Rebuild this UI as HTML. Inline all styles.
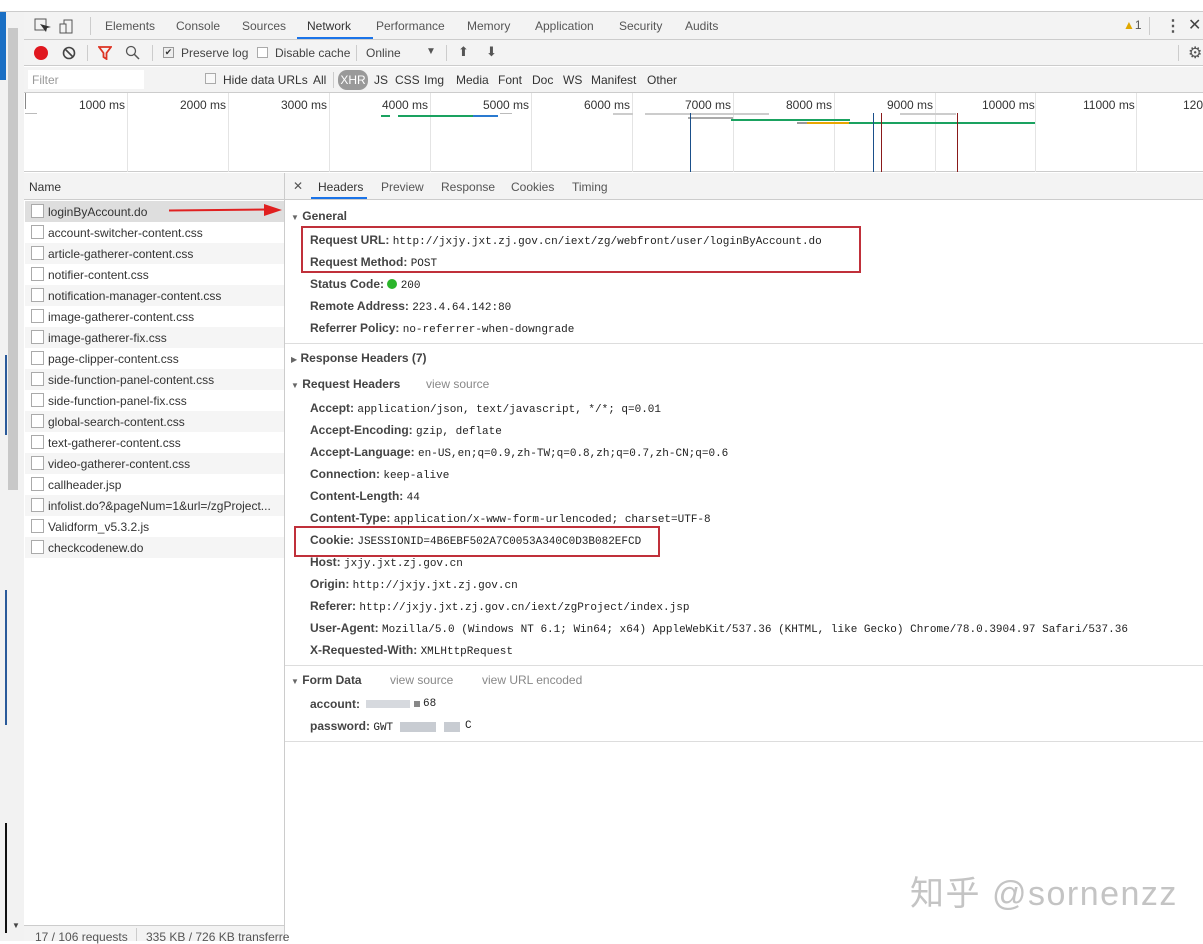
<!DOCTYPE html>
<html><head><meta charset="utf-8"><style>
*{margin:0;padding:0;box-sizing:border-box}
body{width:1203px;height:941px;overflow:hidden;background:#fff;font-family:"Liberation Sans",sans-serif;font-size:12px;color:#333;position:relative}
.a{position:absolute;white-space:nowrap}
.m{font-family:"Liberation Mono",monospace;font-size:11px;color:#222}
.k{font-weight:bold;color:#444}
.g{color:#888}
</style></head><body>
<div class="a" style="left:0;top:0;width:1203px;height:12px;background:#fff;border-bottom:1px solid #ccc"></div>
<div class="a" style="left:0;top:12px;width:24px;height:929px;background:#f2f2f2"></div>
<div class="a" style="left:0;top:12px;width:6px;height:68px;background:#1a6fc4"></div>
<div class="a" style="left:8px;top:28px;width:10px;height:462px;background:#c8c8c8"></div>
<div class="a" style="left:5px;top:590px;width:2px;height:135px;background:#2a5a9a"></div>
<div class="a" style="left:5px;top:823px;width:2px;height:110px;background:#111"></div>
<div class="a" style="left:5px;top:355px;width:2px;height:80px;background:#2a5a9a"></div>
<div class="a" style="left:24px;top:12px;width:1179px;height:28px;background:#f3f3f3;border-bottom:1px solid #ccc"></div>
<svg class="a" style="left:34px;top:18px" width="44" height="16"><rect x="1" y="1" width="11" height="11" fill="none" stroke="#555"/><path d="M6 6l6 8l1-4l4-1z" fill="#333"/><rect x="30" y="2" width="8" height="13" fill="none" stroke="#555"/><rect x="26" y="6" width="6" height="9" fill="#f3f3f3" stroke="#555"/></svg>
<div class="a" style="left:90px;top:17px;width:1px;height:18px;background:#ccc"></div>
<div class="a" style="left:105px;top:19px;color:#555">Elements</div>
<div class="a" style="left:176px;top:19px;color:#555">Console</div>
<div class="a" style="left:242px;top:19px;color:#555">Sources</div>
<div class="a" style="left:307px;top:19px;color:#333">Network</div>
<div class="a" style="left:297px;top:37px;width:76px;height:2px;background:#1a73e8"></div>
<div class="a" style="left:376px;top:19px;color:#555">Performance</div>
<div class="a" style="left:467px;top:19px;color:#555">Memory</div>
<div class="a" style="left:535px;top:19px;color:#555">Application</div>
<div class="a" style="left:619px;top:19px;color:#555">Security</div>
<div class="a" style="left:685px;top:19px;color:#555">Audits</div>
<div class="a" style="left:1123px;top:18px;color:#e0a800;font-size:12px">▲<span style="color:#555">1</span></div>
<div class="a" style="left:1149px;top:17px;width:1px;height:18px;background:#ccc"></div>
<div class="a" style="left:1165px;top:16px;font-size:16px;color:#555;font-weight:bold">⋮</div>
<div class="a" style="left:1188px;top:15px;font-size:16px;color:#444">✕</div>
<div class="a" style="left:24px;top:40px;width:1179px;height:26px;background:#f3f3f3;border-bottom:1px solid #ccc"></div>
<div class="a" style="left:34px;top:46px;width:14px;height:14px;border-radius:50%;background:#e0171f"></div>
<svg class="a" style="left:62px;top:46px" width="14" height="14"><circle cx="7" cy="7" r="5.5" fill="none" stroke="#444" stroke-width="1.6"/><path d="M3 3l8 8" stroke="#444" stroke-width="1.6"/></svg>
<div class="a" style="left:87px;top:45px;width:1px;height:16px;background:#ccc"></div>
<svg class="a" style="left:98px;top:46px" width="14" height="14"><path d="M1 1h12l-4.5 6v6l-3-2v-4z" fill="none" stroke="#d32" stroke-width="1.8"/></svg>
<svg class="a" style="left:125px;top:45px" width="16" height="16"><circle cx="6" cy="6" r="4.5" fill="none" stroke="#555" stroke-width="1.3"/><path d="M9 9l5 5" stroke="#555" stroke-width="1.5"/></svg>
<div class="a" style="left:152px;top:45px;width:1px;height:16px;background:#ccc"></div>
<div class="a" style="left:163px;top:47px;width:11px;height:11px;border:1px solid #999;background:#eee;font-size:9px;line-height:9px;text-align:center">✔</div>
<div class="a" style="left:181px;top:46px;color:#444">Preserve log</div>
<div class="a" style="left:257px;top:47px;width:11px;height:11px;border:1px solid #aaa;background:#fff"></div>
<div class="a" style="left:275px;top:46px;color:#444">Disable cache</div>
<div class="a" style="left:356px;top:45px;width:1px;height:16px;background:#ccc"></div>
<div class="a" style="left:366px;top:46px;color:#444">Online</div>
<div class="a" style="left:426px;top:46px;color:#555;font-size:10px">▼</div>
<div class="a" style="left:446px;top:45px;width:1px;height:16px;background:#ccc"></div>
<div class="a" style="left:458px;top:44px;color:#555;font-size:13px">⬆</div>
<div class="a" style="left:486px;top:44px;color:#555;font-size:13px">⬇</div>
<div class="a" style="left:1178px;top:45px;width:1px;height:16px;background:#ccc"></div>
<div class="a" style="left:1188px;top:43px;font-size:16px;color:#555">⚙</div>
<div class="a" style="left:24px;top:67px;width:1179px;height:26px;background:#f3f3f3;border-bottom:1px solid #ccc"></div>
<div class="a" style="left:28px;top:70px;width:116px;height:19px;background:#fff"></div>
<div class="a" style="left:32px;top:73px;color:#999">Filter</div>
<div class="a" style="left:205px;top:73px;width:11px;height:11px;border:1px solid #aaa;background:#f8f8f8"></div>
<div class="a" style="left:223px;top:73px;color:#333">Hide data URLs</div>
<div class="a" style="left:313px;top:73px;color:#333">All</div>
<div class="a" style="left:333px;top:72px;width:1px;height:16px;background:#ccc"></div>
<div class="a" style="left:338px;top:70px;width:30px;height:20px;background:#999;border-radius:9px;color:#fff;text-align:center;line-height:20px">XHR</div>
<div class="a" style="left:374px;top:73px">JS</div>
<div class="a" style="left:395px;top:73px">CSS</div>
<div class="a" style="left:424px;top:73px">Img</div>
<div class="a" style="left:456px;top:73px">Media</div>
<div class="a" style="left:498px;top:73px">Font</div>
<div class="a" style="left:532px;top:73px">Doc</div>
<div class="a" style="left:563px;top:73px">WS</div>
<div class="a" style="left:591px;top:73px">Manifest</div>
<div class="a" style="left:647px;top:73px">Other</div>
<div class="a" style="left:24px;top:93px;width:1179px;height:79px;background:#fff;border-bottom:1px solid #ccc"></div>
<div class="a" style="left:25px;top:93px;width:1px;height:16px;background:#888"></div>
<div style="position:absolute;left:0;top:93px;height:79px;width:1203px">
<div class="a" style="left:127px;top:0;width:1px;height:79px;background:#e4e4e4"></div>
<div class="a" style="left:228px;top:0;width:1px;height:79px;background:#e4e4e4"></div>
<div class="a" style="left:329px;top:0;width:1px;height:79px;background:#e4e4e4"></div>
<div class="a" style="left:430px;top:0;width:1px;height:79px;background:#e4e4e4"></div>
<div class="a" style="left:531px;top:0;width:1px;height:79px;background:#e4e4e4"></div>
<div class="a" style="left:632px;top:0;width:1px;height:79px;background:#e4e4e4"></div>
<div class="a" style="left:733px;top:0;width:1px;height:79px;background:#e4e4e4"></div>
<div class="a" style="left:834px;top:0;width:1px;height:79px;background:#e4e4e4"></div>
<div class="a" style="left:935px;top:0;width:1px;height:79px;background:#e4e4e4"></div>
<div class="a" style="left:1035px;top:0;width:1px;height:79px;background:#e4e4e4"></div>
<div class="a" style="left:1136px;top:0;width:1px;height:79px;background:#e4e4e4"></div>
</div>
<div class="a" style="left:79px;top:98px;color:#333">1000 ms</div>
<div class="a" style="left:180px;top:98px">2000 ms</div>
<div class="a" style="left:281px;top:98px">3000 ms</div>
<div class="a" style="left:382px;top:98px">4000 ms</div>
<div class="a" style="left:483px;top:98px">5000 ms</div>
<div class="a" style="left:584px;top:98px">6000 ms</div>
<div class="a" style="left:685px;top:98px">7000 ms</div>
<div class="a" style="left:786px;top:98px">8000 ms</div>
<div class="a" style="left:887px;top:98px">9000 ms</div>
<div class="a" style="left:982px;top:98px">10000 ms</div>
<div class="a" style="left:1083px;top:98px">11000 ms</div>
<div class="a" style="left:1183px;top:98px">120</div>
<div class="a" style="left:25px;top:113px;width:12px;height:1px;background:#bbb"></div>
<div class="a" style="left:381px;top:115px;width:9px;height:2px;background:#1aa260"></div>
<div class="a" style="left:398px;top:115px;width:75px;height:2px;background:#1aa260"></div>
<div class="a" style="left:473px;top:115px;width:25px;height:2px;background:#2a7ad0"></div>
<div class="a" style="left:500px;top:113px;width:12px;height:1px;background:#bbb"></div>
<div class="a" style="left:613px;top:113px;width:20px;height:2px;background:#ccc"></div>
<div class="a" style="left:645px;top:113px;width:124px;height:2px;background:#ccc"></div>
<div class="a" style="left:688px;top:117px;width:45px;height:2px;background:#aaa"></div>
<div class="a" style="left:731px;top:119px;width:119px;height:2px;background:#1aa260"></div>
<div class="a" style="left:797px;top:122px;width:10px;height:2px;background:#999"></div>
<div class="a" style="left:807px;top:122px;width:42px;height:2px;background:#e8a600"></div>
<div class="a" style="left:849px;top:122px;width:186px;height:2px;background:#1aa260"></div>
<div class="a" style="left:900px;top:113px;width:56px;height:2px;background:#ccc"></div>
<div class="a" style="left:690px;top:113px;width:1px;height:59px;background:#1a4f8a"></div>
<div class="a" style="left:873px;top:113px;width:1px;height:59px;background:#1a4f8a"></div>
<div class="a" style="left:881px;top:113px;width:1px;height:59px;background:#8a1a1a"></div>
<div class="a" style="left:957px;top:113px;width:1px;height:59px;background:#8a1a1a"></div>
<div class="a" style="left:24px;top:173px;width:261px;height:27px;background:#f3f3f3;border-bottom:1px solid #ccc;border-right:1px solid #ccc"></div>
<div class="a" style="left:29px;top:180px;color:#333">Name</div>
<div class="a" style="left:284px;top:173px;width:1px;height:768px;background:#ccc"></div>
<div id="rows"></div>
<div class="a" style="left:24px;top:925px;width:260px;height:16px;background:#f3f3f3;border-top:1px solid #ccc"></div>
<div class="a" style="left:35px;top:930px;color:#555">17 / 106 requests</div>
<div class="a" style="left:136px;top:928px;width:1px;height:13px;background:#ccc"></div>
<div class="a" style="left:146px;top:930px;color:#555">335 KB / 726 KB transferre</div>
<div class="a" style="left:12px;top:921px;color:#444;font-size:8px">▼</div>
<svg class="a" style="left:168px;top:202px" width="118" height="16"><path d="M1 8.5L100 7.5" stroke="#e02020" stroke-width="2"/><path d="M96 2L114 8L96 14z" fill="#e02020"/></svg>
<div class="a" style="left:285px;top:173px;width:918px;height:27px;background:#f3f3f3;border-bottom:1px solid #ccc"></div>
<div class="a" style="left:293px;top:179px;color:#555">✕</div>
<div class="a" style="left:318px;top:180px;color:#333">Headers</div>
<div class="a" style="left:311px;top:197px;width:56px;height:2px;background:#1a73e8"></div>
<div class="a" style="left:381px;top:180px;color:#555">Preview</div>
<div class="a" style="left:441px;top:180px;color:#555">Response</div>
<div class="a" style="left:511px;top:180px;color:#555">Cookies</div>
<div class="a" style="left:572px;top:180px;color:#555">Timing</div>
<div class="a" style="left:291px;top:209px"><span style="font-size:8px;color:#666">▼</span> <span class="k">General</span></div>
<div class="a" style="left:310px;top:233px"><span class="k">Request URL:</span> <span class="m">http://jxjy.jxt.zj.gov.cn/iext/zg/webfront/user/loginByAccount.do</span></div>
<div class="a" style="left:310px;top:255px"><span class="k">Request Method:</span> <span class="m">POST</span></div>
<div class="a" style="left:301px;top:226px;width:560px;height:47px;border:2px solid #c0303a"></div>
<div class="a" style="left:310px;top:277px"><span class="k">Status Code:</span> <span style="display:inline-block;width:10px;height:10px;border-radius:50%;background:#2bb52b;vertical-align:-1px"></span> <span class="m">200</span></div>
<div class="a" style="left:310px;top:299px"><span class="k">Remote Address:</span> <span class="m">223.4.64.142:80</span></div>
<div class="a" style="left:310px;top:321px"><span class="k">Referrer Policy:</span> <span class="m">no-referrer-when-downgrade</span></div>
<div class="a" style="left:285px;top:343px;width:918px;height:1px;background:#ddd"></div>
<div class="a" style="left:291px;top:351px"><span style="font-size:8px;color:#666">▶</span> <span class="k">Response Headers (7)</span></div>
<div class="a" style="left:291px;top:377px"><span style="font-size:8px;color:#666">▼</span> <span class="k">Request Headers</span></div>
<div class="a g" style="left:426px;top:377px">view source</div>
<div class="a" style="left:310px;top:401px"><span class="k">Accept:</span> <span class="m">application/json, text/javascript, */*; q=0.01</span></div>
<div class="a" style="left:310px;top:423px"><span class="k">Accept-Encoding:</span> <span class="m">gzip, deflate</span></div>
<div class="a" style="left:310px;top:445px"><span class="k">Accept-Language:</span> <span class="m">en-US,en;q=0.9,zh-TW;q=0.8,zh;q=0.7,zh-CN;q=0.6</span></div>
<div class="a" style="left:310px;top:467px"><span class="k">Connection:</span> <span class="m">keep-alive</span></div>
<div class="a" style="left:310px;top:489px"><span class="k">Content-Length:</span> <span class="m">44</span></div>
<div class="a" style="left:310px;top:511px"><span class="k">Content-Type:</span> <span class="m">application/x-www-form-urlencoded; charset=UTF-8</span></div>
<div class="a" style="left:310px;top:533px"><span class="k">Cookie:</span> <span class="m">JSESSIONID=4B6EBF502A7C0053A340C0D3B082EFCD</span></div>
<div class="a" style="left:294px;top:526px;width:366px;height:31px;border:2px solid #c0303a"></div>
<div class="a" style="left:310px;top:555px"><span class="k">Host:</span> <span class="m">jxjy.jxt.zj.gov.cn</span></div>
<div class="a" style="left:310px;top:577px"><span class="k">Origin:</span> <span class="m">http://jxjy.jxt.zj.gov.cn</span></div>
<div class="a" style="left:310px;top:599px"><span class="k">Referer:</span> <span class="m">http://jxjy.jxt.zj.gov.cn/iext/zgProject/index.jsp</span></div>
<div class="a" style="left:310px;top:621px"><span class="k">User-Agent:</span> <span class="m">Mozilla/5.0 (Windows NT 6.1; Win64; x64) AppleWebKit/537.36 (KHTML, like Gecko) Chrome/78.0.3904.97 Safari/537.36</span></div>
<div class="a" style="left:310px;top:643px"><span class="k">X-Requested-With:</span> <span class="m">XMLHttpRequest</span></div>
<div class="a" style="left:285px;top:665px;width:918px;height:1px;background:#ddd"></div>
<div class="a" style="left:291px;top:673px"><span style="font-size:8px;color:#666">▼</span> <span class="k">Form Data</span></div>
<div class="a g" style="left:390px;top:673px">view source</div>
<div class="a g" style="left:482px;top:673px">view URL encoded</div>
<div class="a" style="left:310px;top:697px"><span class="k">account:</span></div>
<div class="a" style="left:366px;top:700px;width:44px;height:8px;background:#ccd0d6;opacity:.8"></div>
<div class="a" style="left:414px;top:701px;width:6px;height:6px;background:#888"></div>
<div class="a m" style="left:423px;top:698px">68</div>
<div class="a" style="left:310px;top:719px"><span class="k">password:</span> <span class="m">GWT</span></div>
<div class="a" style="left:400px;top:722px;width:36px;height:10px;background:#c8ccd2"></div>
<div class="a" style="left:444px;top:722px;width:16px;height:10px;background:#c8ccd2"></div>
<div class="a m" style="left:465px;top:720px">C</div>
<div class="a" style="left:285px;top:741px;width:918px;height:1px;background:#ddd"></div>
<div class="a" style="left:910px;top:866px;font-family:'Liberation Sans','Noto Sans CJK SC',sans-serif;font-size:34px;letter-spacing:1.5px;color:#c4c4c4">知乎 @sornenzz</div>
<script>
var n=["loginByAccount.do","account-switcher-content.css","article-gatherer-content.css","notifier-content.css","notification-manager-content.css","image-gatherer-content.css","image-gatherer-fix.css","page-clipper-content.css","side-function-panel-content.css","side-function-panel-fix.css","global-search-content.css","text-gatherer-content.css","video-gatherer-content.css","callheader.jsp","infolist.do?&pageNum=1&url=/zgProject...","Validform_v5.3.2.js","checkcodenew.do"];
var h="";n.forEach(function(t,i){var y=201+i*21;var bg=i==0?"#dedede":(i%2==0?"#f5f5f5":"#fff");
h+='<div class="a" style="left:25px;top:'+y+'px;width:259px;height:21px;background:'+bg+'"></div><div class="a" style="left:31px;top:'+(y+3)+'px;width:13px;height:14px;border:1px solid #aaa;background:#fff"></div><div class="a" style="left:48px;top:'+(y+4)+'px;color:#333">'+t.replace(/&/g,"&amp;")+'</div>';});
document.getElementById("rows").innerHTML=h;
</script>
</body></html>
